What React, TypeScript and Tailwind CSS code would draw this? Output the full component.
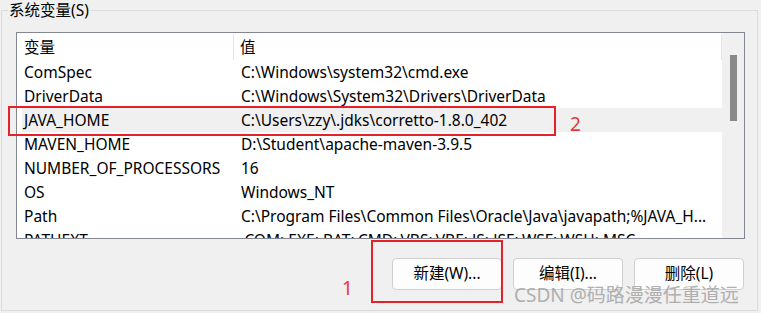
import React from "react";

const rows = [
  { name: "ComSpec", value: "C:\\Windows\\system32\\cmd.exe" },
  { name: "DriverData", value: "C:\\Windows\\System32\\Drivers\\DriverData" },
  { name: "JAVA_HOME", value: "C:\\Users\\zzy\\.jdks\\corretto-1.8.0_402", selected: true },
  { name: "MAVEN_HOME", value: "D:\\Student\\apache-maven-3.9.5" },
  { name: "NUMBER_OF_PROCESSORS", value: "16" },
  { name: "OS", value: "Windows_NT" },
  { name: "Path", value: "C:\\Program Files\\Common Files\\Oracle\\Java\\javapath;%JAVA_H..." },
  { name: "PATHEXT", value: ".COM;.EXE;.BAT;.CMD;.VBS;.VBE;.JS;.JSE;.WSF;.WSH;.MSC" },
];

export default function App() {
  return (
    <div
      className="relative w-[761px] h-[313px] overflow-hidden bg-[#f0f0f0] text-[15.5px] text-black"
      style={{ fontFamily: '"Noto Sans", "Noto Sans CJK SC", sans-serif' }}
    >
      <fieldset className="ml-px w-[757px] h-[311px] border border-[#dcdcdc]">
        <legend className="ml-[6px] px-px leading-[20px]">系统变量(S)</legend>

        {/* list */}
        <div className="mt-[12px] ml-[14px] w-[729px] h-[207px] border border-[#828790] bg-white flex overflow-hidden">
          <div className="w-[705px] flex flex-col">
            {/* header */}
            <div className="h-[27px] flex shrink-0">
              <div className="w-[217px] pl-[7px] leading-[27px] border-r border-[#e5e5e5] mt-px">变量</div>
              <div className="flex-1 pl-[6px] leading-[27px] border-r border-[#e5e5e5] mt-px">值</div>
            </div>
            {rows.map((r) => (
              <div
                key={r.name}
                className={
                  "h-[24px] shrink-0 ml-[5px] flex leading-[24px] whitespace-nowrap " +
                  (r.selected ? "bg-[#f0f0f0]" : "")
                }
              >
                <div className="w-[219px] pl-[2px]">{r.name}</div>
                <div className="flex-1">{r.value}</div>
              </div>
            ))}
          </div>
          {/* scrollbar */}
          <div className="w-[22px] bg-[#f0f0f0] flex justify-center pt-[22px]">
            <div className="w-[7px] h-[66px] bg-[#8a8a8a]" />
          </div>
        </div>

        {/* buttons */}
        <div className="mt-[19px] mr-[13px] flex justify-end gap-[11px]">
          {["新建(W)...", "编辑(I)...", "删除(L)"].map((b) => (
            <button
              key={b}
              className="w-[110px] h-[32px] rounded-[4px] border border-[#d0d0d0] bg-[#fdfdfd] text-[15.5px]"
            >
              {b}
            </button>
          ))}
        </div>
      </fieldset>

      {/* annotations */}
      <div className="absolute left-[8px] top-[106px] w-[548px] h-[30px] border-2 border-[#e8202a]" />
      <div className="absolute left-[570px] top-[112px] text-[19px] leading-[24px] text-[#e8383d]">2</div>
      <div className="absolute left-[371px] top-[240px] w-[132px] h-[63px] border-2 border-[#e8202a]" />
      <div className="absolute left-[342px] top-[276px] text-[19px] leading-[24px] text-[#e8383d]">1</div>
      <div className="absolute left-[514px] top-[282px] text-[19px] leading-[26px] text-[#a0a0a0] opacity-80 whitespace-nowrap">
        CSDN @码路漫漫任重道远
      </div>
    </div>
  );
}
